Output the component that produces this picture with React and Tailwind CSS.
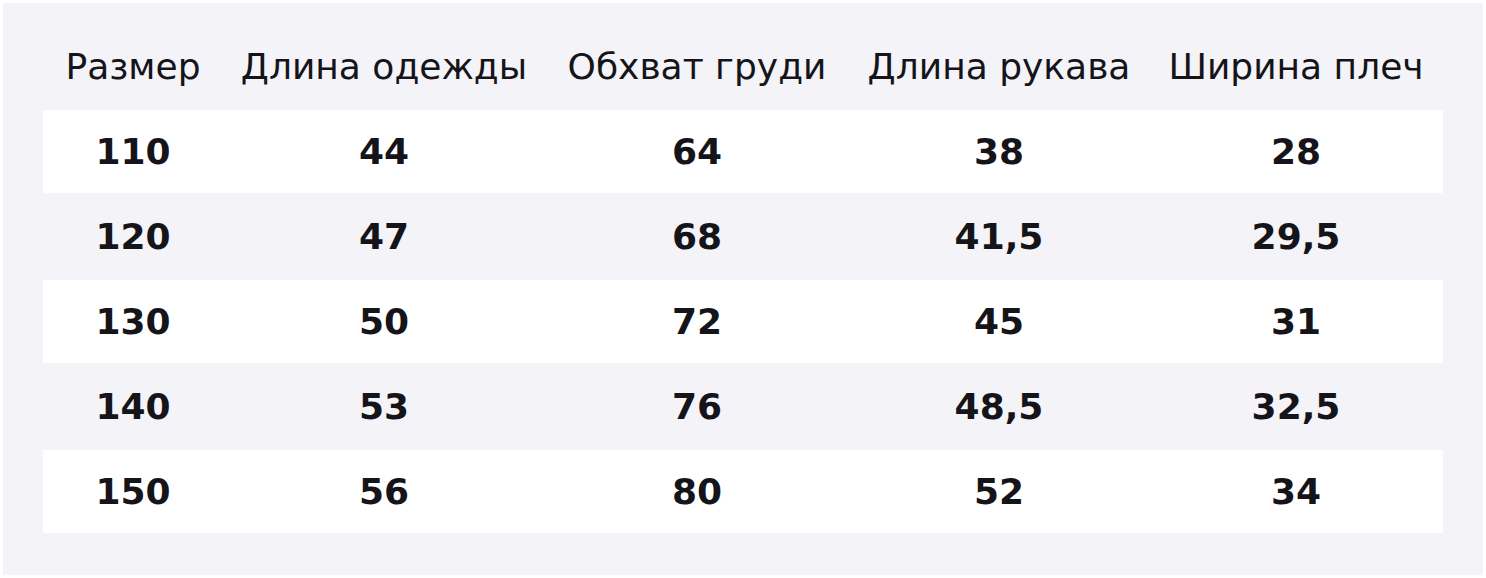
import React from 'react';

const headers = ['Размер', 'Длина одежды', 'Обхват груди', 'Длина рукава', 'Ширина плеч'];

const rows = [
  ['110', '44', '64', '38', '28'],
  ['120', '47', '68', '41,5', '29,5'],
  ['130', '50', '72', '45', '31'],
  ['140', '53', '76', '48,5', '32,5'],
  ['150', '56', '80', '52', '34'],
];

const cols = 'grid grid-cols-[180px_322px_304px_300px_294px]';

export default function App() {
  return (
    <div className="bg-white p-[3px] w-[1486px] h-[578px] font-['DejaVu_Sans',sans-serif] text-[#151419]">
      <div className="bg-[#f3f3f8] h-[572px] px-10 pt-[40px]">
        {/* Заголовок таблицы */}
        <div className={`${cols} h-[67px] items-start pt-[3px]`}>
          {headers.map((h) => (
            <div key={h} className="text-center text-[36px] leading-[42px] whitespace-nowrap">
              {h}
            </div>
          ))}
        </div>

        {/* Строки */}
        {rows.map((r, i) => (
          <div
            key={r[0]}
            className={`${cols} items-center ${i % 2 === 0 ? 'bg-white h-[83px]' : 'bg-[#f3f3f8] h-[87px]'}`}
          >
            {r.map((v, j) => (
              <div key={j} className="text-center text-[36px] leading-[42px] font-bold">
                {v}
              </div>
            ))}
          </div>
        ))}
      </div>
    </div>
  );
}
